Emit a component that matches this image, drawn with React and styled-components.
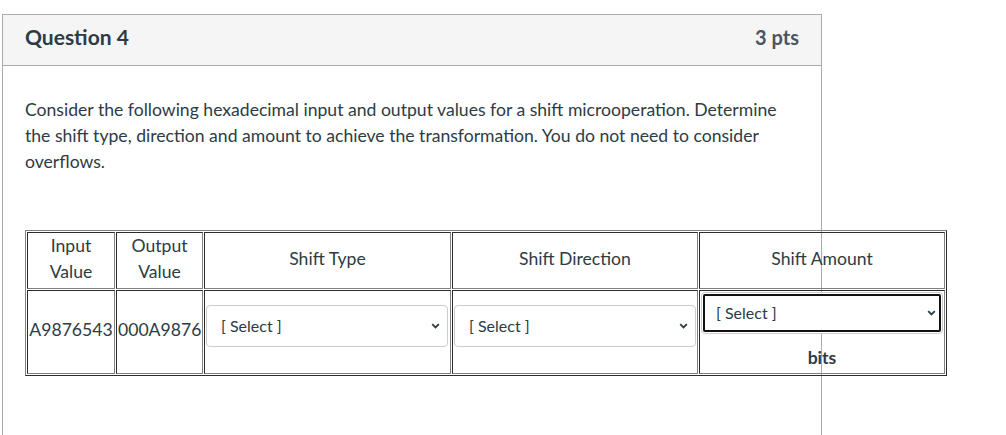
import React from "react";
import styled, { createGlobalStyle } from "styled-components";

const Global = createGlobalStyle`
  html, body { margin: 0; padding: 0; background: #fff; }
  body {
    font-family: Lato, "Open Sans", "Liberation Sans", sans-serif;
    color: #2d3b45;
    overflow: hidden;
  }
`;

const Page = styled.div`
  padding: 14px 0 0 2px;
`;

const Card = styled.section`
  width: 820px;
  min-height: 440px;
  box-sizing: border-box;
  border: 1px solid #aaaaaa;
  border-bottom: none;
  background: #fff;
`;

const Header = styled.header`
  display: flex;
  justify-content: space-between;
  align-items: center;
  height: 43px;
  padding: 0 22px 7px;
  background: #f5f5f5;
  border-bottom: 1px solid #aaaaaa;
`;

const Title = styled.h2`
  margin: 0;
  font-size: 21px;
  font-weight: 700;
  color: #2d3b45;
`;

const Points = styled.span`
  font-size: 20px;
  font-weight: 700;
  color: #4b5560;
`;

const Body = styled.div`
  padding: 31px 22px 0;
`;

const Prompt = styled.p`
  margin: 0 0 55px;
  font-size: 17.6px;
  line-height: 26px;
`;

const Table = styled.table`
  width: 922px;
  table-layout: fixed;
  border-collapse: separate;
  border-spacing: 1px;
  border: 1px outset grey;
  font-size: 17.6px;
  line-height: 26px;
  color: #2d3b45;
`;

const HeadCell = styled.th`
  box-sizing: border-box;
  width: ${(p) => p.$w}px;
  border: 1px inset grey;
  padding: 0 1px 3px;
  font-weight: 400;
  text-align: center;
  vertical-align: middle;
`;

const Cell = styled.td`
  box-sizing: border-box;
  border: 1px inset grey;
  padding: 1px 1px ${(p) => p.$pb || 1}px;
  text-align: ${(p) => (p.$left ? "left" : "center")};
  vertical-align: middle;
  white-space: nowrap;
`;

const SelectWrap = styled.div`
  position: relative;
  width: 242px;
  height: 42px;
  margin-bottom: ${(p) => (p.$focused ? 0 : 12)}px;
`;

const Select = styled.select`
  appearance: none;
  -webkit-appearance: none;
  width: 242px;
  height: 42px;
  box-sizing: border-box;
  border: 1px solid #c7cdd1;
  border-radius: 4px;
  padding: 0 28px 2px 14px;
  background: #fff;
  font-family: Lato, "Open Sans", sans-serif;
  font-size: 16px;
  color: #2d3b45;
  outline: ${(p) => (p.$focused ? "2px solid #111" : "none")};
  outline-offset: -4px;
`;

const Chevron = styled.svg`
  position: absolute;
  right: ${(p) => (p.$focused ? 7 : 8)}px;
  top: 50%;
  margin-top: -3px;
  width: 9px;
  height: 6px;
  pointer-events: none;
`;

const Unit = styled.div`
  padding: 11px 0 1px;
  text-align: center;
  font-weight: 700;
  line-height: 26px;
`;

function Dropdown({ focused }) {
  return (
    <SelectWrap $focused={focused}>
      <Select $focused={focused} defaultValue="">
        <option value="">[ Select ]</option>
      </Select>
      <Chevron $focused={focused} viewBox="0 0 9 6">
        <polyline
          points="1.2,1.2 4.5,4.5 7.8,1.2"
          fill="none"
          stroke="#2d3b45"
          strokeWidth="1.8"
        />
      </Chevron>
    </SelectWrap>
  );
}

export default function App() {
  return (
    <>
      <Global />
      <Page>
        <Card>
          <Header>
            <Title>Question 4</Title>
            <Points>3 pts</Points>
          </Header>
          <Body>
            <Prompt>
              Consider the following hexadecimal input and output values for a
              shift microoperation. Determine the shift type, direction and
              amount to achieve the transformation. You do not need to consider
              overflows.
            </Prompt>
            <Table>
              <thead>
                <tr>
                  <HeadCell $w={88}>
                    Input
                    <br />
                    Value
                  </HeadCell>
                  <HeadCell $w={87}>
                    Output
                    <br />
                    Value
                  </HeadCell>
                  <HeadCell $w={247}>Shift Type</HeadCell>
                  <HeadCell $w={246}>Shift Direction</HeadCell>
                  <HeadCell $w={246}>Shift Amount</HeadCell>
                </tr>
              </thead>
              <tbody>
                <tr>
                  <Cell $pb={6}>A9876543</Cell>
                  <Cell $pb={6}>000A9876</Cell>
                  <Cell $left>
                    <Dropdown />
                  </Cell>
                  <Cell $left>
                    <Dropdown />
                  </Cell>
                  <Cell $left>
                    <Dropdown focused />
                    <Unit>bits</Unit>
                  </Cell>
                </tr>
              </tbody>
            </Table>
          </Body>
        </Card>
      </Page>
    </>
  );
}
